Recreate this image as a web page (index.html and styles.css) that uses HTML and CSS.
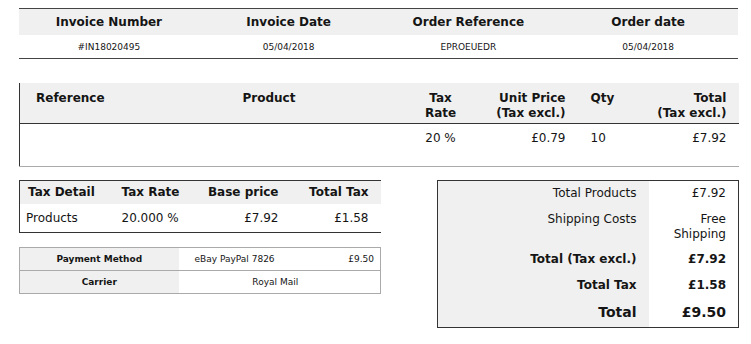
FILE: index.html
```html
<!DOCTYPE html>
<html>
<head>
<meta charset="utf-8">
<link rel="stylesheet" href="styles.css">
</head>
<body>
<div class="page">
  <table class="info">
    <tr class="info-head">
      <th>Invoice Number</th>
      <th>Invoice Date</th>
      <th>Order Reference</th>
      <th>Order date</th>
    </tr>
    <tr class="info-data">
      <td>#IN18020495</td>
      <td>05/04/2018</td>
      <td>EPROEUEDR</td>
      <td>05/04/2018</td>
    </tr>
  </table>

  <table class="products">
    <colgroup>
      <col class="pc1"><col class="pc2"><col class="pc3"><col class="pc4"><col class="pc5"><col class="pc6">
    </colgroup>
    <tr class="prod-head">
      <th class="p-ref">Reference</th>
      <th class="p-prod">Product</th>
      <th class="p-rate">Tax<br>Rate</th>
      <th class="p-unit">Unit Price<br>(Tax excl.)</th>
      <th class="p-qty">Qty</th>
      <th class="p-total">Total<br>(Tax excl.)</th>
    </tr>
    <tr class="prod-data">
      <td class="p-ref"></td>
      <td class="p-prod"></td>
      <td class="p-rate">20 %</td>
      <td class="p-unit">£0.79</td>
      <td class="p-qty">10</td>
      <td class="p-total">£7.92</td>
    </tr>
  </table>

  <div class="lower">
    <div class="left-col">
      <table class="taxes">
        <colgroup>
          <col class="tc1"><col class="tc2"><col class="tc3"><col class="tc4">
        </colgroup>
        <tr class="tax-head">
          <th class="t-detail">Tax Detail</th>
          <th class="t-rate">Tax Rate</th>
          <th class="t-base">Base price</th>
          <th class="t-total">Total Tax</th>
        </tr>
        <tr class="tax-data">
          <td class="t-detail">Products</td>
          <td class="t-rate">20.000 %</td>
          <td class="t-base">£7.92</td>
          <td class="t-total">£1.58</td>
        </tr>
      </table>

      <table class="payment">
        <colgroup>
          <col class="yc1"><col class="yc2"><col class="yc3">
        </colgroup>
        <tr>
          <th>Payment Method</th>
          <td class="pay-name">eBay PayPal 7826</td>
          <td class="pay-amount">£9.50</td>
        </tr>
        <tr>
          <th>Carrier</th>
          <td class="carrier" colspan="2">Royal Mail</td>
        </tr>
      </table>
    </div>

    <table class="totals">
      <colgroup>
        <col class="sc1"><col class="sc2">
      </colgroup>
      <tr>
        <th>Total Products</th>
        <td>£7.92</td>
      </tr>
      <tr class="ship">
        <th>Shipping Costs</th>
        <td>Free<br>Shipping</td>
      </tr>
      <tr class="strong">
        <th>Total (Tax excl.)</th>
        <td>£7.92</td>
      </tr>
      <tr class="strong">
        <th>Total Tax</th>
        <td>£1.58</td>
      </tr>
      <tr class="grand">
        <th>Total</th>
        <td>£9.50</td>
      </tr>
    </table>
  </div>
</div>
</body>
</html>
```

FILE: styles.css
```css
html, body {
  margin: 0;
  padding: 0;
  background: #ffffff;
}

body {
  font-family: "DejaVu Sans", Verdana, sans-serif;
  color: #151515;
}

.page {
  padding: 8px 13px 0 19px;
  width: 719px;
}

table {
  border-collapse: collapse;
  border-spacing: 0;
}

th, td {
  padding: 0;
}

/* Top info table */
.info {
  width: 719px;
  table-layout: fixed;
  border-top: 1px solid #444444;
  border-bottom: 1px solid #444444;
}

.info-head th {
  background: #f0f0f0;
  height: 26px;
  font-size: 12px;
  font-weight: bold;
  text-align: center;
  vertical-align: middle;
}

.info-data td {
  height: 23px;
  font-size: 9px;
  text-align: center;
  vertical-align: middle;
}

/* Products table */
.products {
  margin-top: 24px;
  width: 719px;
  table-layout: fixed;
  border-left: 1px solid #333333;
  border-bottom: 1px solid #aaaaaa;
}

.pc1 { width: 211px; }
.pc2 { width: 185px; }
.pc3 { width: 50px; }
.pc4 { width: 112px; }
.pc5 { width: 73px; }
.pc6 { width: 88px; }

.prod-head th {
  background: #f0f0f0;
  height: 40px;
  font-size: 12px;
  line-height: 15px;
  font-weight: bold;
  vertical-align: top;
  padding-top: 8px;
  box-sizing: border-box;
  border-bottom: 1px solid #333333;
}

.prod-data td {
  height: 43px;
  font-size: 12px;
  line-height: 15px;
  vertical-align: top;
  padding-top: 7px;
  box-sizing: border-box;
}

.p-ref { text-align: left; padding-left: 16px; }
.p-prod { text-align: left; padding-left: 12px; }
.p-rate { text-align: center; }
.p-unit { text-align: right; padding-right: 12px; }
.p-qty { text-align: left; padding-left: 13px; }
.p-total { text-align: right; padding-right: 12px; }

/* Lower section */
.lower {
  margin-top: 13px;
  display: flex;
  align-items: flex-start;
  gap: 57px;
}

.left-col {
  width: 361px;
  display: flex;
  flex-direction: column;
  gap: 14px;
}

.taxes {
  width: 361px;
  table-layout: fixed;
  border-top: 1px solid #333333;
  border-left: 1px solid #333333;
  border-bottom: 1px solid #333333;
}

.tc1 { width: 96px; }
.tc2 { width: 85px; }
.tc3 { width: 85px; }
.tc4 { width: 95px; }

.tax-head th {
  background: #f0f0f0;
  height: 23px;
  font-size: 12px;
  font-weight: bold;
  vertical-align: middle;
}

.tax-data td {
  height: 28px;
  font-size: 12px;
  vertical-align: middle;
}

.tax-head .t-detail { text-align: left; padding-left: 8px; }
.tax-data .t-detail { text-align: left; padding-left: 6px; }
.t-rate { text-align: left; padding-left: 6px; }
.t-base { text-align: right; padding-right: 7px; }
.t-total { text-align: right; padding-right: 12px; }

.payment {
  width: 361px;
  table-layout: fixed;
  border: 1px solid #aaaaaa;
}

.yc1 { width: 159px; }
.yc2 { width: 140px; }
.yc3 { width: 62px; }

.payment tr + tr th,
.payment tr + tr td {
  border-top: 1px solid #aaaaaa;
}

.payment th {
  background: #f0f0f0;
  height: 22px;
  font-size: 9px;
  font-weight: bold;
  text-align: center;
  vertical-align: middle;
}

.payment td {
  height: 22px;
  font-size: 9px;
  vertical-align: middle;
}

.pay-name { text-align: left; padding-left: 16px; }
.pay-amount { text-align: right; padding-right: 6px; }
.carrier { text-align: center; padding-right: 8px; }

/* Totals box */
.totals {
  width: 301px;
  table-layout: fixed;
  border: 1px solid #333333;
}

.sc1 { width: 211px; }
.sc2 { width: 90px; }

.totals th {
  background: #f0f0f0;
  font-weight: normal;
  font-size: 12px;
  line-height: 15px;
  text-align: right;
  vertical-align: top;
  padding: 5px 12px 6px 0;
}

.totals td {
  font-size: 12px;
  line-height: 15px;
  text-align: right;
  vertical-align: top;
  padding: 5px 12px 6px 0;
}

.totals .ship th,
.totals .ship td {
  padding-bottom: 5px;
}

.totals .strong th,
.totals .strong td {
  font-weight: bold;
}

.totals .grand th,
.totals .grand td {
  font-weight: bold;
  font-size: 14px;
  line-height: 17px;
}
```
